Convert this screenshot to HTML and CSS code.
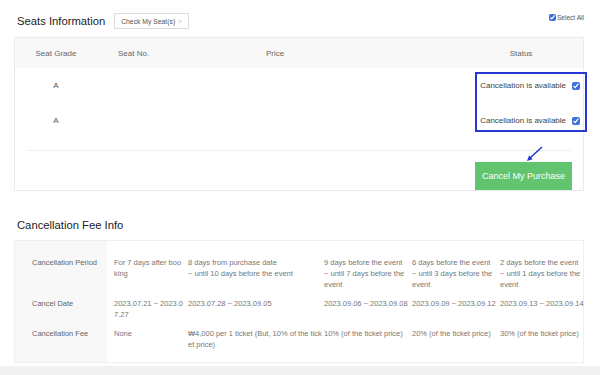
FILE: index.html
```html
<!DOCTYPE html>
<html lang="en">
<head>
    <meta charset="UTF-8">
    <meta name="viewport" content="width=device-width, initial-scale=1.0">
    <title>Seats Information</title>
    <link rel="stylesheet" href="styles.css">
</head>
<body>

<div class="page">
    <div class="seats-head">
        <h2 class="title">Seats Information</h2>
        <button class="check-btn">Check My Seat(s) <span class="chev">&gt;</span></button>
        <label class="select-all"><input type="checkbox" checked>Select All</label>
    </div>

    <div class="seats-panel">
        <div class="seats-row seats-header">
            <div class="c-grade">Seat Grade</div>
            <div class="c-no">Seat No.</div>
            <div class="c-price">Price</div>
            <div></div>
            <div class="c-status">Status</div>
        </div>
        <div class="seats-row">
            <div class="c-grade">A</div>
            <div class="c-no"></div>
            <div class="c-price"></div>
            <div></div>
            <div class="c-status-cell">Cancellation is available <input type="checkbox" checked></div>
        </div>
        <div class="seats-row">
            <div class="c-grade">A</div>
            <div class="c-no"></div>
            <div class="c-price"></div>
            <div></div>
            <div class="c-status-cell">Cancellation is available <input type="checkbox" checked></div>
        </div>

        <div class="divider"></div>
        <div class="actions">
            <button class="cancel-btn">Cancel My Purchase</button>
        </div>

        <!-- annotation -->
        <div class="highlight"></div>
        <svg class="pointer" width="30" height="25" viewBox="0 0 30 25">
            <line x1="22" y1="7" x2="10" y2="18" stroke="#2433d0" stroke-width="1.5"/>
            <polygon points="7,21 12.6,19.2 9.1,15.6" fill="#2433d0"/>
        </svg>
    </div>

    <h2 class="title fee-title">Cancellation Fee Info</h2>

    <div class="fee-table">
        <div class="fee-row first">
            <div class="lbl">Cancellation Period</div>
            <div class="v1 brk">For 7 days after booking</div>
            <div class="v2 brk">8 days from purchase date<br>~ until 10 days before the event</div>
            <div class="v3">9 days before the event<br>~ until 7 days before the event</div>
            <div class="v4">6 days before the event<br>~ until 3 days before the event</div>
            <div class="v5">2 days before the event<br>~ until 1 days before the event</div>
        </div>
        <div class="fee-row">
            <div class="lbl">Cancel Date</div>
            <div class="v1 brk">2023.07.21 ~ 2023.07.27</div>
            <div class="v2 brk">2023.07.28 ~ 2023.09.05</div>
            <div class="v3">2023.09.06 ~ 2023.09.08</div>
            <div class="v4">2023.09.09 ~ 2023.09.12</div>
            <div class="v5 nowrap">2023.09.13 ~ 2023.09.14</div>
        </div>
        <div class="fee-row last">
            <div class="lbl">Cancellation Fee</div>
            <div class="v1 brk">None</div>
            <div class="v2 brk">₩4,000 per 1 ticket (But, 10% of the ticket price)</div>
            <div class="v3">10% (of the ticket price)</div>
            <div class="v4">20% (of the ticket price)</div>
            <div class="v5">30% (of the ticket price)</div>
        </div>
    </div>
</div>

<div class="scroll-track"></div>

</body>
</html>
```

FILE: styles.css
```css
body {
    margin: 0;
    font-family: "Liberation Sans", Arial, sans-serif;
    color: #333;
    background-color: #fff;
}

.page {
    width: 570px;
    padding: 0 16px 0 14px;
}

.title {
    margin: 0;
    font-size: 11.25px;
    font-weight: normal;
    color: #222;
    line-height: 16px;
}

.seats-head {
    display: flex;
    align-items: center;
    padding: 13px 0 0 3px;
    height: 16px;
}

.check-btn {
    margin-left: 9px;
    height: 16px;
    padding: 0 6px;
    font-family: inherit;
    font-size: 6.8px;
    color: #555;
    background-color: #fff;
    border: 1px solid #ddd;
}

.check-btn .chev {
    color: #bbb;
    margin-left: 1px;
}

.select-all {
    margin-left: auto;
    align-self: flex-start;
    margin-top: 1px;
    display: flex;
    align-items: center;
    font-size: 6.6px;
    color: #555;
}

.select-all input {
    width: 7px;
    height: 7px;
    margin: 0 1px 0 0;
    accent-color: #3a6fdc;
}

.seats-panel {
    position: relative;
    margin-top: 8px;
    border: 1px solid #ebebeb;
    height: 152px;
}

.seats-row {
    display: grid;
    grid-template-columns: 82px 100px 156px 106px 124px;
    align-items: center;
    height: 35px;
    font-size: 8px;
    color: #555;
}

.seats-header {
    height: 30px;
    background-color: #f8f8f8;
    color: #666;
}

.c-grade {
    text-align: center;
}

.c-no {
    padding-left: 21px;
}

.c-price,
.c-status {
    text-align: center;
}

.c-status-cell {
    display: flex;
    align-items: center;
    justify-content: flex-end;
    padding-right: 3px;
    color: #444;
}

.c-status-cell input {
    width: 8px;
    height: 8px;
    margin: 0 0 0 6px;
    accent-color: #3a6fdc;
}

.divider {
    margin: 12px 12px 0 13px;
    border-top: 1px solid #eee;
}

.actions {
    display: flex;
    justify-content: flex-end;
    padding: 11px 11px 0 0;
}

.cancel-btn {
    width: 97px;
    height: 28px;
    padding: 0;
    font-family: inherit;
    font-size: 9px;
    color: #fff;
    background-color: #62c46e;
    border: none;
}

.highlight {
    position: absolute;
    left: 460px;
    top: 34px;
    width: 108px;
    height: 56px;
    border: 2px solid #2636d4;
}

.pointer {
    position: absolute;
    left: 505px;
    top: 102px;
}

.fee-title {
    margin: 26px 0 7px 3px;
}

.fee-table {
    border: 1px solid #efefef;
    font-size: 7.5px;
    line-height: 11px;
    color: #777;
}

.fee-row {
    display: grid;
    grid-template-columns: 92px 79px 136px 88px 88px 1fr;
}

.fee-row > div {
    padding: 4px 0 4px 2px;
}

.fee-row.first > div {
    padding-top: 16px;
}

.fee-row.last > div {
    padding-bottom: 12px;
}

.fee-row .lbl {
    padding-left: 17px;
    background-color: #f8f8f8;
    color: #666;
}

.fee-row .v1 {
    padding-left: 7px;
    padding-right: 2px;
}

.brk {
    word-break: break-all;
}

.nowrap {
    white-space: nowrap;
}

.scroll-track {
    margin-top: 3px;
    height: 9px;
    background-color: #f1f1f1;
}
```
